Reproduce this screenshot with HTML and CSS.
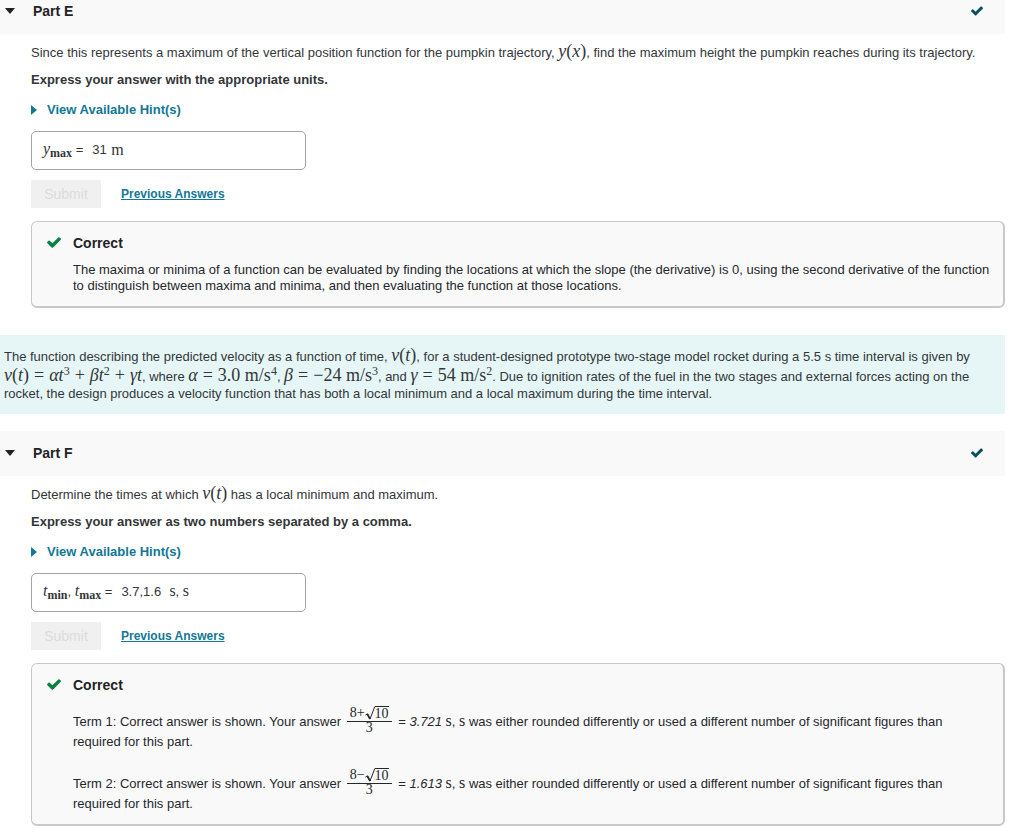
FILE: index.html
```html
<!DOCTYPE html>
<html lang="en">
<head>
<meta charset="utf-8">
<title>Pumpkin trajectory and rocket velocity</title>
<link rel="stylesheet" href="styles.css">
</head>
<body>
<svg class="defs" aria-hidden="true">
  <symbol id="check" viewBox="121 334 1550 1188"><path d="M1671 566q0 40-28 68l-724 724-136 136q-28 28-68 28t-68-28l-136-136-362-362q-28-28-28-68t28-68l136-136q28-28 68-28t68 28l294 295 656-657q28-28 68-28t68 28l136 136q28 28 28 68z"/></symbol>
  <symbol id="root" viewBox="0 0 10 14"><path d="M0.5 9 L2.5 7.8 L5 13 L9.8 0.5" fill="none" stroke="currentColor"/><path d="M2.3 8 L5 13" fill="none" stroke="currentColor" stroke-width="1.6"/></symbol>
</svg>
<main class="page">
  <section class="part">
    <header class="part-header part-header-first">
      <button class="part-toggle" type="button" aria-expanded="true"><svg class="caret" viewBox="0 0 10 6"><path d="M0 0h10L5 6z"/></svg><span>Part E</span></button>
      <svg class="check part-check" role="img" aria-label="Complete"><use href="#check"/></svg>
    </header>
    <div class="part-body">
      <p class="prompt">Since this represents a maximum of the vertical position function for the pumpkin trajectory, <span class="math"><i>y</i>(<i>x</i>)</span>, find the maximum height the pumpkin reaches during its trajectory.</p>
      <p class="instruction">Express your answer with the appropriate units.</p>
      <button class="hints" type="button"><svg class="hint-arrow" viewBox="0 0 6 10"><path d="M0 0l6 5-6 5z"/></svg><span>View Available Hint(s)</span></button>
      <div class="answer">
        <label for="answer-e"><span class="math"><i>y</i><sub>max</sub></span> =</label>
        <input class="value value-short" id="answer-e" type="text" value="31" readonly>
        <span class="math">m</span>
      </div>
      <div class="actions">
        <button class="submit" type="button" disabled>Submit</button>
        <a class="previous" href="#">Previous Answers</a>
      </div>
      <section class="feedback">
        <svg class="check feedback-check" aria-hidden="true"><use href="#check"/></svg>
        <div class="feedback-text">
          <h3>Correct</h3>
          <p>The maxima or minima of a function can be evaluated by finding the locations at which the slope (the derivative) is 0, using the second derivative of the function to distinguish between maxima and minima, and then evaluating the function at those locations.</p>
        </div>
      </section>
    </div>
  </section>

  <p class="context">The function describing the predicted velocity as a function of time, <span class="math"><i>v</i>(<i>t</i>)</span>, for a student-designed prototype two-stage model rocket during a 5.5 s time interval is given by <span class="math"><i>v</i>(<i>t</i>)<span class="op">=</span><i>αt</i><sup>3</sup><span class="op">+</span><i>βt</i><sup>2</sup><span class="op">+</span><i>γt</i></span>, where <span class="math"><i>α</i><span class="op">=</span>3.0 m/s<sup>4</sup></span>, <span class="math"><i>β</i><span class="op">=</span>−24 m/s<sup>3</sup></span>, and <span class="math"><i>γ</i><span class="op">=</span>54 m/s<sup>2</sup></span>. Due to ignition rates of the fuel in the two stages and external forces acting on the rocket, the design produces a velocity function that has both a local minimum and a local maximum during the time interval.</p>

  <section class="part">
    <header class="part-header">
      <button class="part-toggle" type="button" aria-expanded="true"><svg class="caret" viewBox="0 0 10 6"><path d="M0 0h10L5 6z"/></svg><span>Part F</span></button>
      <svg class="check part-check" role="img" aria-label="Complete"><use href="#check"/></svg>
    </header>
    <div class="part-body">
      <p class="prompt">Determine the times at which <span class="math"><i>v</i>(<i>t</i>)</span> has a local minimum and maximum.</p>
      <p class="instruction">Express your answer as two numbers separated by a comma.</p>
      <button class="hints" type="button"><svg class="hint-arrow" viewBox="0 0 6 10"><path d="M0 0l6 5-6 5z"/></svg><span>View Available Hint(s)</span></button>
      <div class="answer">
        <label for="answer-f"><span class="math"><i>t</i><sub>min</sub></span>, <span class="math"><i>t</i><sub>max</sub></span> =</label>
        <input class="value value-long" id="answer-f" type="text" value="3.7,1.6" readonly>
        <span><span class="math">s</span>, <span class="math">s</span></span>
      </div>
      <div class="actions">
        <button class="submit" type="button" disabled>Submit</button>
        <a class="previous" href="#">Previous Answers</a>
      </div>
      <section class="feedback">
        <svg class="check feedback-check" aria-hidden="true"><use href="#check"/></svg>
        <div class="feedback-text">
          <h3>Correct</h3>
          <p class="term">Term 1: Correct answer is shown. Your answer <span class="fraction"><span class="numerator">8+<svg class="root"><use href="#root"/></svg><span class="radicand">10</span></span><span class="denominator">3</span></span> = <i>3.721</i> <span class="math">s</span>, <span class="math">s</span> was either rounded differently or used a different number of significant figures than required for this part.</p>
          <p class="term">Term 2: Correct answer is shown. Your answer <span class="fraction"><span class="numerator">8−<svg class="root"><use href="#root"/></svg><span class="radicand">10</span></span><span class="denominator">3</span></span> = <i>1.613</i> <span class="math">s</span>, <span class="math">s</span> was either rounded differently or used a different number of significant figures than required for this part.</p>
        </div>
      </section>
    </div>
  </section>
</main>
</body>
</html>
```
FILE: styles.css
```css
* { box-sizing: border-box; }

body {
  margin: 0;
  background: #fff;
  color: #333639;
  font: 13px/16px "Liberation Sans", Arial, sans-serif;
}

p, h3 { margin: 0; }
button { padding: 0; border: 0; background: none; font: inherit; color: inherit; }
svg { display: block; fill: currentColor; }
.defs { position: absolute; width: 0; height: 0; }

.page { margin-right: 8px; }

.part-header {
  display: flex;
  align-items: center;
  justify-content: space-between;
  padding: 11px 22px 12px 5px;
  background: #f9f9f9;
}
.part-header-first { padding-top: 0; }
.part-toggle {
  display: flex;
  align-items: center;
  gap: 18px;
  color: #1f2326;
  font-size: 14px;
  font-weight: bold;
  line-height: 22px;
}
.caret { width: 10px; height: 6px; }
.check { flex: none; }
.part-check { width: 12px; height: 10px; color: #0b4f5f; }

.part-body {
  display: flex;
  flex-direction: column;
  align-items: flex-start;
  padding: 10px 0 0 31px;
}
.prompt { line-height: 18px; }
.instruction { margin-top: 9px; font-weight: bold; line-height: 18px; }
.hints {
  display: flex;
  align-items: center;
  gap: 10px;
  margin-top: 12px;
  color: #117896;
  font-weight: bold;
  line-height: 18px;
}
.hint-arrow { width: 6px; height: 10px; }

.math {
  font-family: "Liberation Serif", "Times New Roman", serif;
  font-size: 16px;
  line-height: 14px;
  white-space: nowrap;
}
.op { margin: 0 5px; }
sup, sub { font-size: 12px; line-height: 0; }
sub { vertical-align: -3px; font-weight: bold; }
sup { vertical-align: 6px; }

.answer {
  display: flex;
  align-items: center;
  gap: 4px;
  width: 275px;
  height: 39px;
  margin-top: 12px;
  padding: 0 11px 2px;
  border: 1px solid #a3a3a3;
  border-radius: 5px;
}
.answer label { margin-right: 5px; }
.value {
  padding: 0;
  border: 0;
  background: none;
  color: inherit;
  font: inherit;
}
.value-short { width: 15px; }
.value-long { width: 44px; }

.actions { display: flex; align-items: center; gap: 20px; margin-top: 10px; }
.submit {
  width: 70px;
  height: 28px;
  background: #f0f0f0;
  color: #dcdcdc;
  font-size: 14px;
}
.previous { color: #117896; font-size: 12px; font-weight: bold; }

.feedback {
  display: flex;
  align-self: stretch;
  gap: 12px;
  margin-top: 13px;
  padding: 13px 12px 12px 15px;
  border: 1px solid #c8c8c8;
  border-right-width: 2px;
  border-bottom-width: 2px;
  border-radius: 6px;
  background: #f9f9f9;
  color: #25282b;
}
.feedback-check { width: 14px; height: 11px; margin-top: 2px; color: #0a8043; }
h3 { margin-bottom: 11px; color: #1f2326; font-size: 14px; line-height: 16px; }

.context {
  margin: 27px 0 17px;
  padding: 13px 4px 12px;
  background: #e6f6f6;
  line-height: 17px;
}
.context .math, .prompt .math { font-size: 18px; }
.context sup { line-height: 12px; }

.term { margin-top: 13px; }
.term + .term { margin-top: 18px; }
.fraction {
  display: inline-flex;
  flex-direction: column;
  align-items: center;
  margin: 0 3px 0 2px;
  vertical-align: 9px;
  font: 14px/14px "Liberation Serif", "Times New Roman", serif;
}
.numerator { display: flex; padding: 0 3px; border-bottom: 1px solid currentColor; }
.denominator { line-height: 12px; }
.root { width: 10px; height: 14px; }
.radicand { border-top: 1px solid currentColor; }
```
